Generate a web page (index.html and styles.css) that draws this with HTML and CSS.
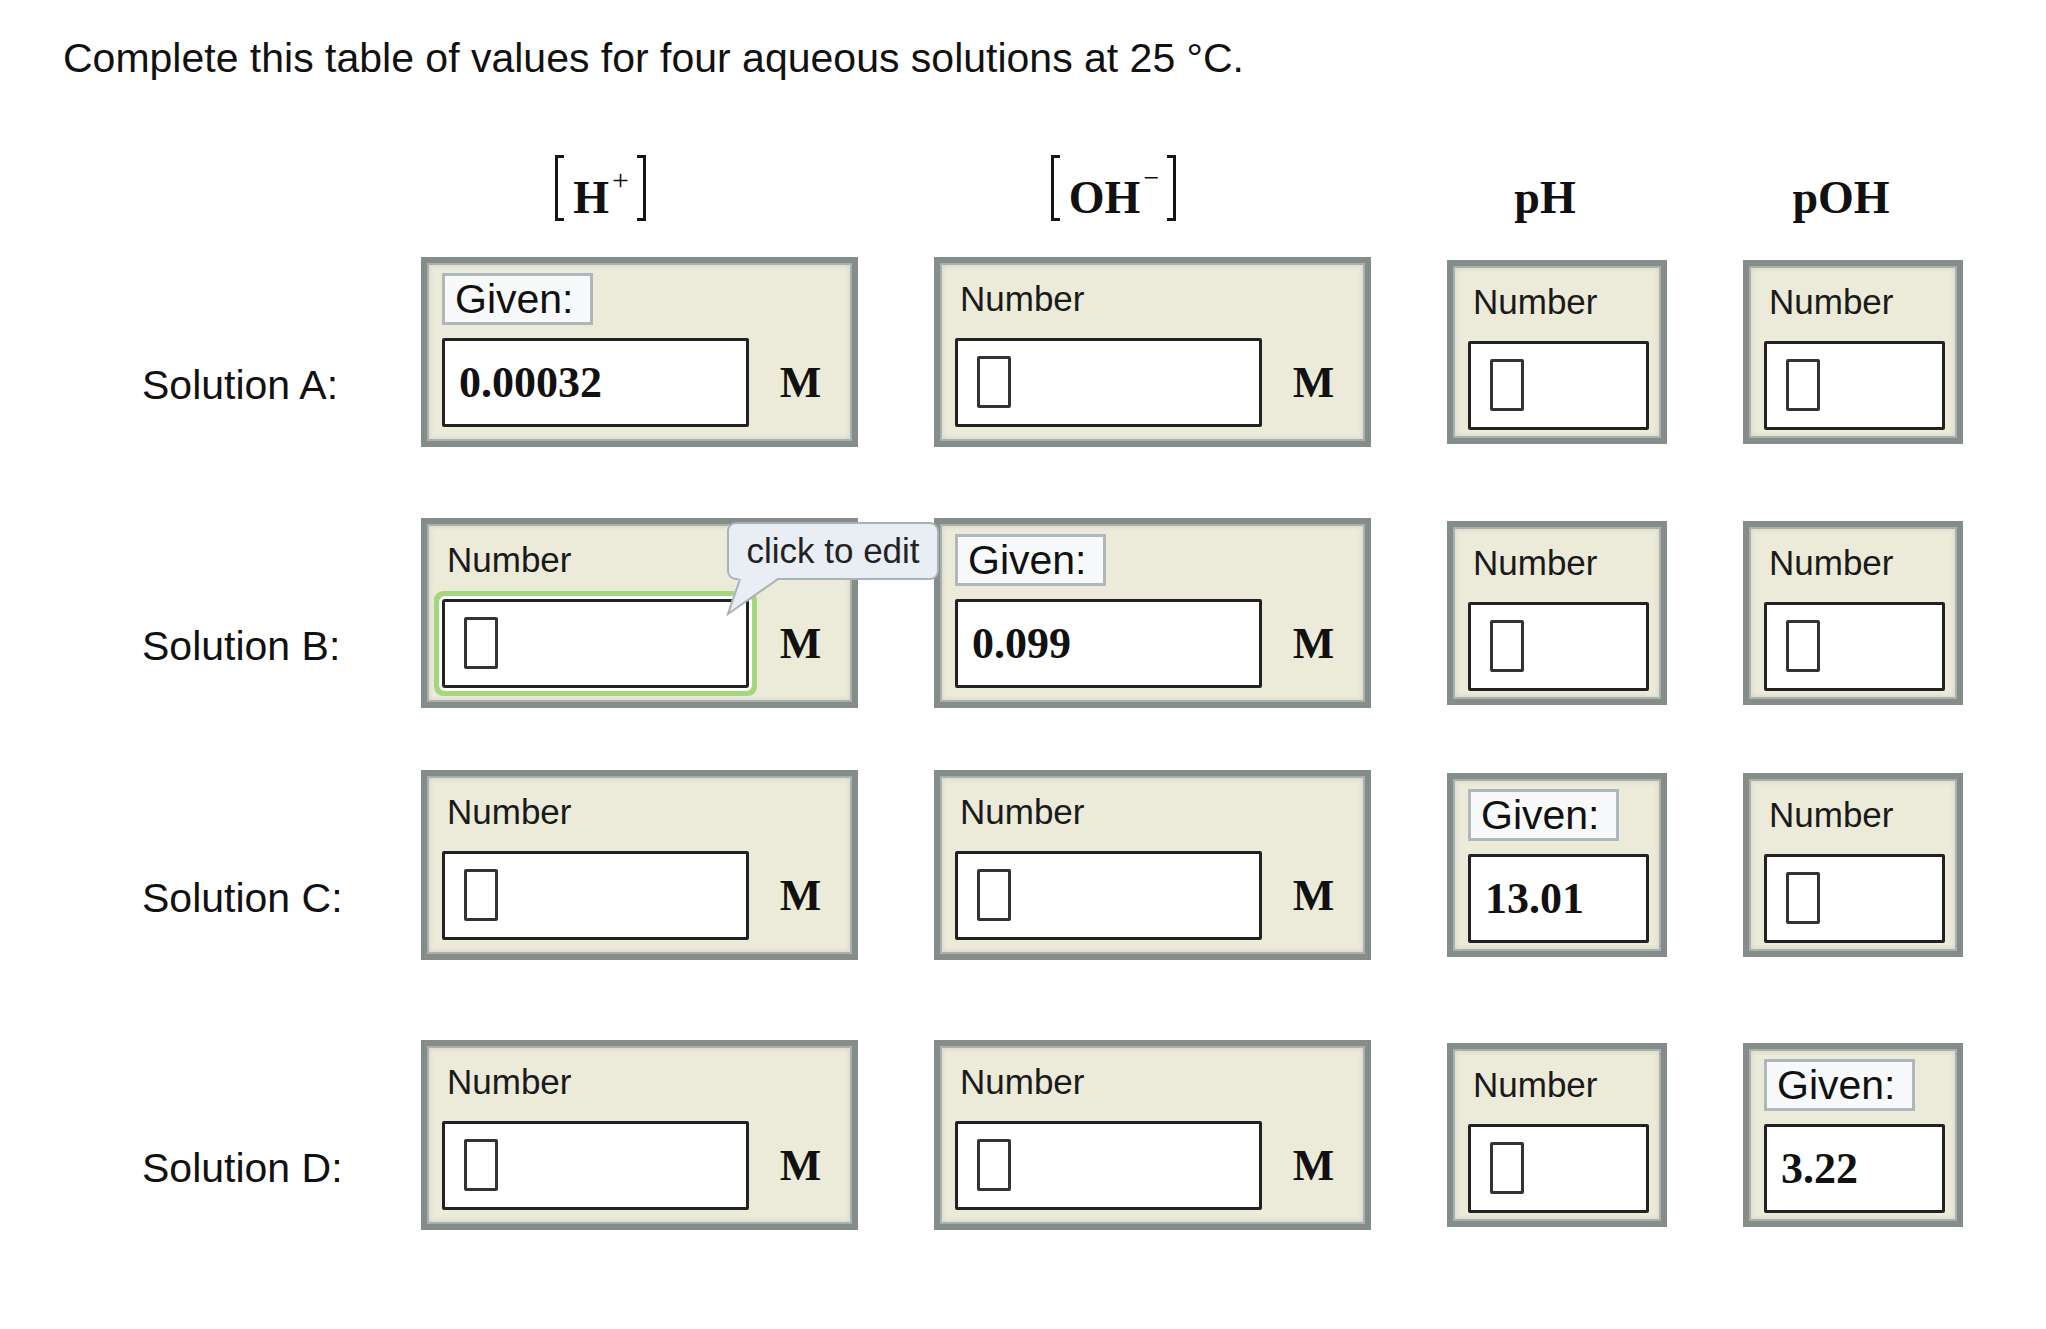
FILE: index.html
```html
<!DOCTYPE html>
<html lang="en">
<head>
<meta charset="utf-8">
<title>Aqueous solutions table</title>
<link rel="stylesheet" href="styles.css">
</head>
<body>
<p class="prompt">Complete this table of values for four aqueous solutions at 25 °C.</p>
<div class="grid">
  <div></div>
  <div class="head head-wide"><span class="ion"><span class="br br-l"></span><span class="sym">H</span><span class="chg">+</span><span class="br br-r"></span></span></div>
  <div class="head head-wide"><span class="ion"><span class="br br-l"></span><span class="sym">OH</span><span class="chg minus">−</span><span class="br br-r"></span></span></div>
  <div class="head head-narrow"><span class="sym">pH</span></div>
  <div class="head head-narrow"><span class="sym">pOH</span></div>

  <div class="label">Solution A:</div>
  <div class="cell"><div class="box wide"><div class="box-top"><span class="given">Given:</span></div><div class="box-row"><div class="field"><span class="val">0.00032</span></div><span class="unit">M</span></div></div></div>
  <div class="cell"><div class="box wide"><div class="box-top"><span class="num">Number</span></div><div class="box-row"><div class="field"><span class="tofu"></span></div><span class="unit">M</span></div></div></div>
  <div class="cell"><div class="box narrow"><div class="box-top"><span class="num">Number</span></div><div class="box-row"><div class="field"><span class="tofu"></span></div></div></div></div>
  <div class="cell"><div class="box narrow"><div class="box-top"><span class="num">Number</span></div><div class="box-row"><div class="field"><span class="tofu"></span></div></div></div></div>

  <div class="label">Solution B:</div>
  <div class="cell"><div class="box wide"><div class="box-top"><span class="num">Number</span></div><div class="box-row"><div class="field focus"><span class="tofu"></span></div><span class="unit">M</span></div></div>
    <div class="tip">click to edit<svg class="tail" width="56" height="40" viewBox="0 0 56 40"><polygon points="12,0 52,0 0,38" fill="#e8eef4"/><polyline points="13,2 1,37 51,2" fill="none" stroke="#a9b1b9" stroke-width="2"/></svg></div>
  </div>
  <div class="cell"><div class="box wide"><div class="box-top"><span class="given">Given:</span></div><div class="box-row"><div class="field"><span class="val">0.099</span></div><span class="unit">M</span></div></div></div>
  <div class="cell"><div class="box narrow"><div class="box-top"><span class="num">Number</span></div><div class="box-row"><div class="field"><span class="tofu"></span></div></div></div></div>
  <div class="cell"><div class="box narrow"><div class="box-top"><span class="num">Number</span></div><div class="box-row"><div class="field"><span class="tofu"></span></div></div></div></div>

  <div class="label">Solution C:</div>
  <div class="cell"><div class="box wide"><div class="box-top"><span class="num">Number</span></div><div class="box-row"><div class="field"><span class="tofu"></span></div><span class="unit">M</span></div></div></div>
  <div class="cell"><div class="box wide"><div class="box-top"><span class="num">Number</span></div><div class="box-row"><div class="field"><span class="tofu"></span></div><span class="unit">M</span></div></div></div>
  <div class="cell"><div class="box narrow"><div class="box-top"><span class="given">Given:</span></div><div class="box-row"><div class="field"><span class="val">13.01</span></div></div></div></div>
  <div class="cell"><div class="box narrow"><div class="box-top"><span class="num">Number</span></div><div class="box-row"><div class="field"><span class="tofu"></span></div></div></div></div>

  <div class="label">Solution D:</div>
  <div class="cell"><div class="box wide"><div class="box-top"><span class="num">Number</span></div><div class="box-row"><div class="field"><span class="tofu"></span></div><span class="unit">M</span></div></div></div>
  <div class="cell"><div class="box wide"><div class="box-top"><span class="num">Number</span></div><div class="box-row"><div class="field"><span class="tofu"></span></div><span class="unit">M</span></div></div></div>
  <div class="cell"><div class="box narrow"><div class="box-top"><span class="num">Number</span></div><div class="box-row"><div class="field"><span class="tofu"></span></div></div></div></div>
  <div class="cell"><div class="box narrow"><div class="box-top"><span class="given">Given:</span></div><div class="box-row"><div class="field"><span class="val">3.22</span></div></div></div></div>
</div>
</body>
</html>
```
FILE: styles.css
```css
body {
  margin: 0;
  background: #ffffff;
  color: #111111;
  font-family: "Liberation Sans", Arial, sans-serif;
}

.prompt {
  margin: 35px 0 0 63px;
  font-size: 41px;
  line-height: 47px;
}

.grid {
  display: grid;
  grid-template-columns: 203px 437px 437px 220px 220px;
  grid-template-rows: 72px 261px 261px 243px 297px;
  column-gap: 76px;
  margin: 67px 0 0 142px;
}

.head {
  align-self: end;
  display: flex;
  justify-content: center;
  align-items: flex-end;
  font-family: "Liberation Serif", "Times New Roman", serif;
}

.head-wide { padding-right: 78px; }
.head-narrow { padding-right: 24px; }

.ion {
  display: inline-flex;
  align-items: flex-end;
}

.br {
  height: 66px;
  border: 3px solid #151515;
  box-sizing: border-box;
}
.br-l { border-right: none; width: 9px; }
.br-r { border-left: none; width: 9px; }

.sym {
  font-weight: bold;
  font-size: 46px;
  line-height: 46px;
}
.ion .sym { margin: 0 3px 0 9px; }

.chg {
  align-self: flex-start;
  margin-top: 10px;
  margin-right: 8px;
  font-size: 30px;
  line-height: 30px;
}
.chg.minus { font-size: 28px; margin-top: 8px; }

.label {
  align-self: center;
  padding-top: 68px;
  font-size: 41px;
  line-height: 47px;
  white-space: nowrap;
}

.cell {
  position: relative;
  align-self: center;
}

.box {
  box-sizing: border-box;
  height: 190px;
  border: 6px solid #858d8b;
  box-shadow: inset 0 0 0 2px #a9b0ad, inset 0 0 4px 3px #d9d8c9;
  background: #ecead9;
  padding: 10px 0 0 15px;
}
.box.wide { width: 437px; }
.box.narrow { width: 220px; height: 184px; }

.box-top {
  height: 52px;
  margin-bottom: 13px;
  display: flex;
  align-items: center;
}

.num {
  padding-left: 5px;
  font-size: 35px;
  color: #1a1a1a;
}

.given {
  box-sizing: border-box;
  width: 151px;
  height: 52px;
  border: 3px solid #aeb8bb;
  background: #f7f9fa;
  padding-left: 10px;
  font-size: 41px;
  line-height: 46px;
}

.box-row {
  display: flex;
  align-items: center;
}

.field {
  box-sizing: border-box;
  width: 307px;
  height: 89px;
  border: 3px solid #222222;
  border-radius: 2px;
  background: #ffffff;
  display: flex;
  align-items: center;
  padding-left: 14px;
}
.narrow .field { width: 181px; }

.field.focus {
  box-shadow: 0 0 0 3px #ffffff, 0 0 0 8px #a4d67b;
  border-radius: 3px;
}

.val {
  font-family: "Liberation Serif", "Times New Roman", serif;
  font-weight: bold;
  font-size: 44px;
}

.tofu {
  box-sizing: border-box;
  width: 34px;
  height: 52px;
  margin-left: 5px;
  border: 3px solid #333333;
  border-radius: 2px;
}

.unit {
  flex: 1;
  text-align: center;
  font-family: "Liberation Serif", "Times New Roman", serif;
  font-weight: bold;
  font-size: 44px;
}

.tip {
  position: absolute;
  left: 306px;
  top: 4px;
  z-index: 2;
  box-sizing: border-box;
  width: 212px;
  height: 58px;
  border: 2px solid #a9b1b9;
  border-radius: 9px;
  background: #e8eef4;
  color: #222222;
  font-size: 35px;
  line-height: 54px;
  text-align: center;
}

.tail {
  position: absolute;
  left: -2px;
  top: calc(100% - 1px);
  overflow: visible;
}
```
